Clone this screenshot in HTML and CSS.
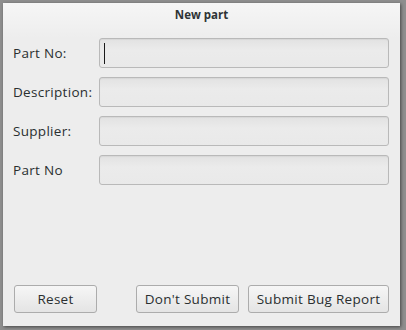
FILE: index.html
```html
<!DOCTYPE html>
<html>
<head>
<meta charset="utf-8">
<link rel="stylesheet" href="styles.css">
</head>
<body>
<div class="dialog">
  <div class="titlebar">New part</div>
  <div class="form">
    <label class="label">Part No:</label>
    <div class="input focused"><span class="cursor"></span></div>
    <label class="label">Description:</label>
    <div class="input"></div>
    <label class="label">Supplier:</label>
    <div class="input"></div>
    <label class="label">Part No</label>
    <div class="input"></div>
  </div>
  <div class="spacer"></div>
  <div class="buttons">
    <button class="btn btn-reset">Reset</button>
    <div class="grow"></div>
    <button class="btn btn-dont">Don't Submit</button>
    <button class="btn btn-submit">Submit Bug Report</button>
  </div>
</div>
</body>
</html>
```

FILE: styles.css
```css
html, body {
  margin: 0;
  padding: 0;
}
body {
  width: 406px;
  height: 330px;
  background: #8e8e8e;
  overflow: hidden;
  font-family: "Open Sans", "DejaVu Sans", sans-serif;
  color: #2e3436;
}
.dialog {
  box-sizing: border-box;
  margin: 3px 0 0 3px;
  width: 397px;
  height: 323px;
  background: #ededed;
  display: flex;
  flex-direction: column;
  box-shadow: 1px 1px 3px rgba(0,0,0,0.5);
}
.titlebar {
  height: 35px;
  box-sizing: border-box;
  padding-top: 4px;
  text-align: center;
  font-size: 11.5px;
  font-weight: bold;
  background: linear-gradient(#f6f6f6, #ededed);
}
.form {
  display: grid;
  grid-template-columns: 86px 290px;
  grid-auto-rows: 30px;
  row-gap: 9px;
  padding-left: 10px;
}
.label {
  font-size: 13.5px;
  display: flex;
  align-items: center;
  letter-spacing: 0.3px;
  color: #2a2f30;
}
.input {
  box-sizing: border-box;
  border: 1px solid #b9b9b9;
  border-radius: 3px;
  background: linear-gradient(#e2e2e2, #ebebeb 40%, #e9e9e9);
  box-shadow: inset 0 1px 1px rgba(0,0,0,0.05);
  position: relative;
}
.cursor {
  position: absolute;
  left: 4px;
  top: 4px;
  width: 1px;
  height: 21px;
  background: #1a1a1a;
}
.spacer {
  flex: 1;
}
.buttons {
  display: flex;
  padding: 0 11px 13px 11px;
  gap: 9px;
}
.grow {
  flex: 1;
}
.btn {
  height: 28px;
  box-sizing: border-box;
  border: 1px solid #acacac;
  border-radius: 3px;
  background: linear-gradient(#f6f6f6, #e4e4e4);
  font-family: "Open Sans", "DejaVu Sans", sans-serif;
  font-size: 13.5px;
  color: #2a2f30;
  padding: 0;
  letter-spacing: 0.3px;
}
.btn-reset { width: 83px; }
.btn-dont { width: 103px; }
.btn-submit { width: 141px; }
```
